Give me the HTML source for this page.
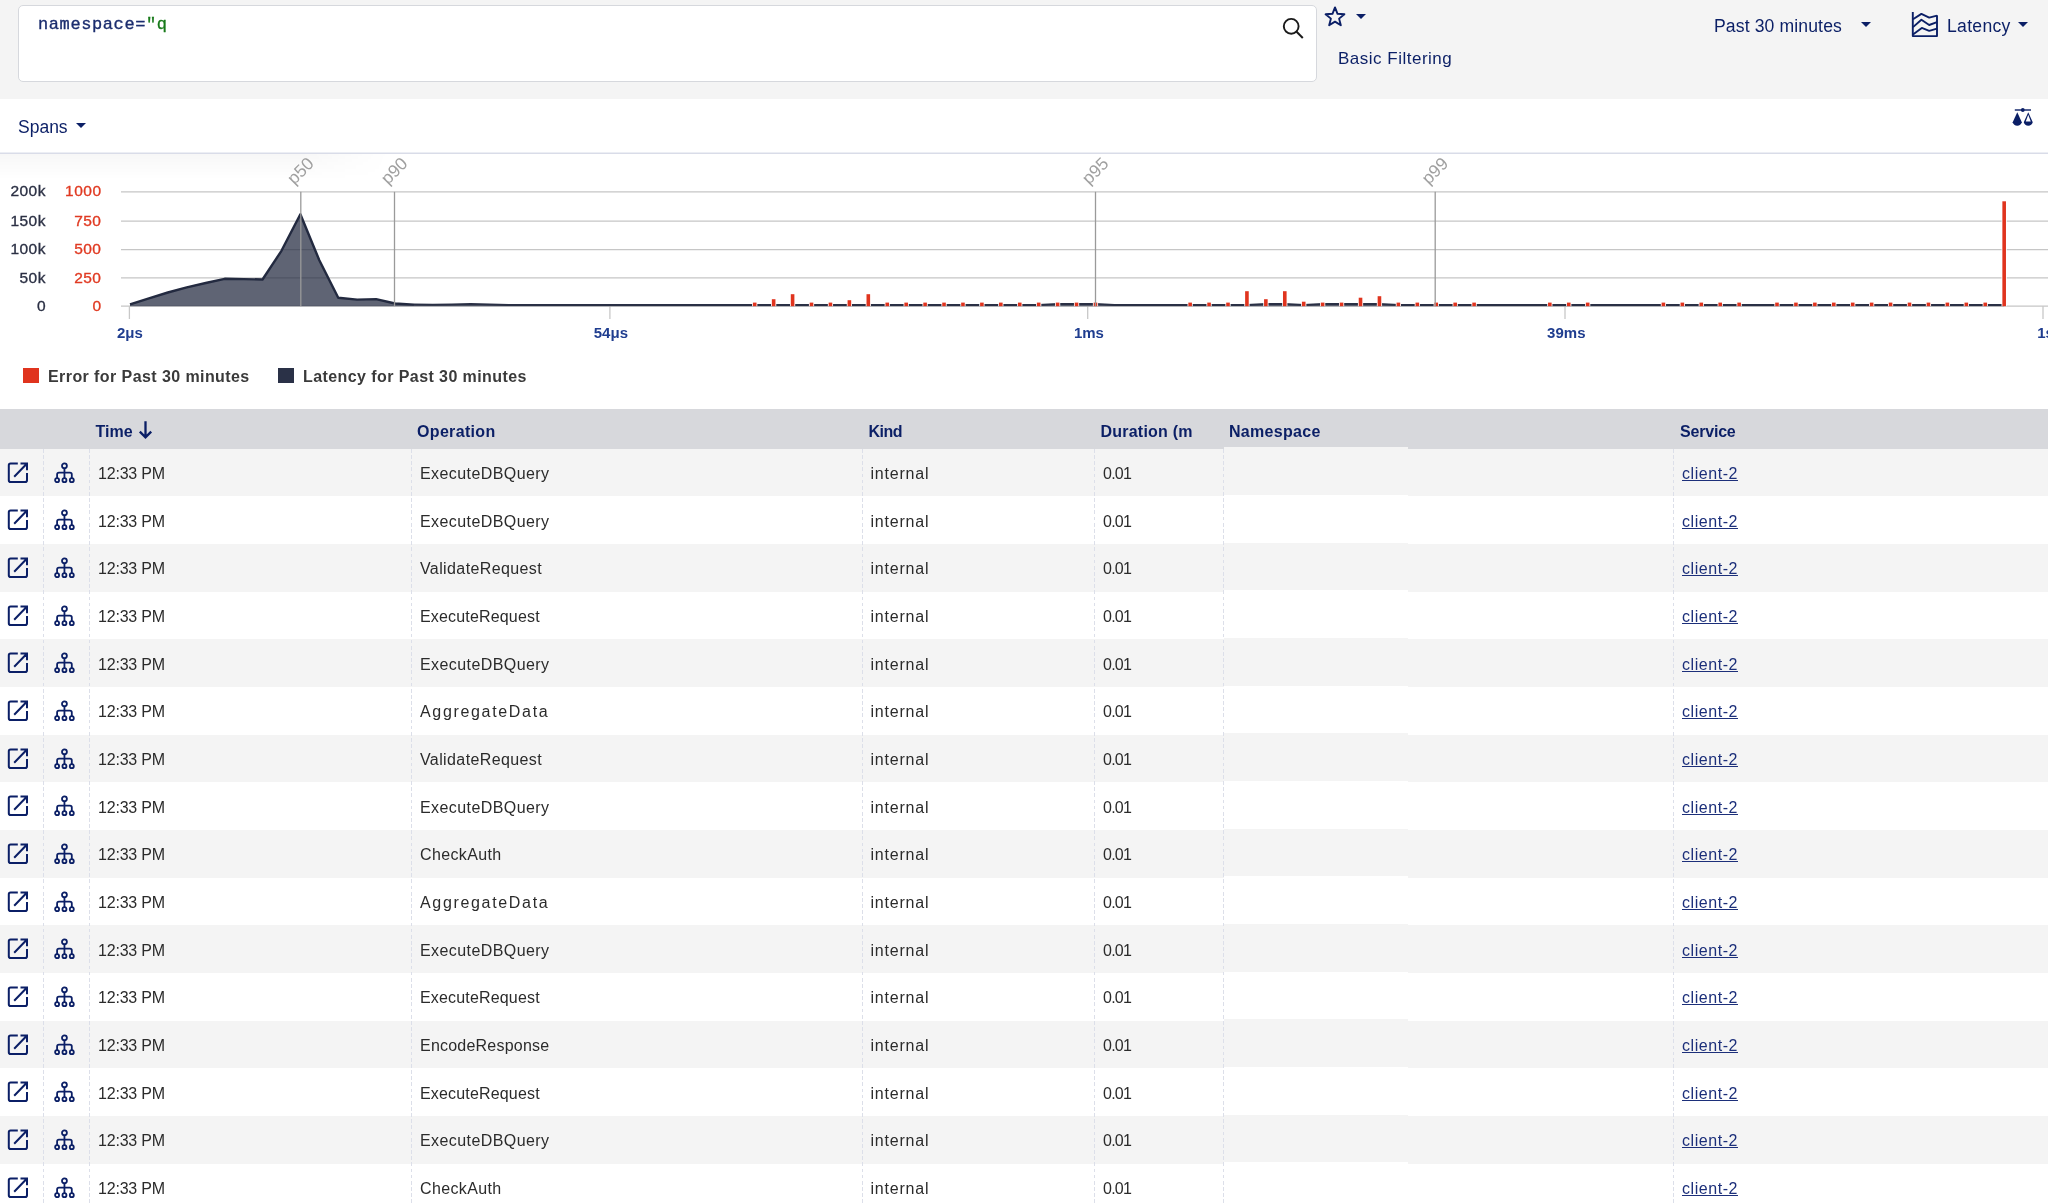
<!DOCTYPE html>
<html><head><meta charset="utf-8"><title>Spans</title>
<style>
html,body{margin:0;padding:0;}
body{width:2048px;height:1203px;overflow:hidden;position:relative;background:#fff;font-family:"Liberation Sans",sans-serif;color:#0b1f66;}
.abs{position:absolute;}
.topbar{position:absolute;left:0;top:0;width:2048px;height:99px;background:#f4f4f4;}
.search{position:absolute;left:18px;top:5px;width:1297px;height:75px;background:#fff;border:1px solid #d6d8dd;border-radius:5px;}
.q{position:absolute;left:38px;top:13.5px;font-family:"Liberation Mono",monospace;font-size:17px;letter-spacing:0.6px;line-height:22px;color:#1b2d6e;-webkit-text-stroke:0.35px currentColor;white-space:pre;}
.q .g{color:#187a1a;}
.t{position:absolute;white-space:nowrap;line-height:1;}
.tabline{position:absolute;left:0;top:152px;width:2048px;height:2px;background:linear-gradient(#eceef4 50%,#d9dce8 50%);}
.shadow{position:absolute;left:0;top:154px;width:400px;height:26px;background:linear-gradient(to bottom,rgba(0,0,0,0.03),rgba(0,0,0,0));-webkit-mask-image:linear-gradient(to right,#000 0,#000 300px,transparent 390px);mask-image:linear-gradient(to right,#000 0,#000 300px,transparent 390px);}
.chart{position:absolute;left:0;top:150px;}
.legend{position:absolute;top:368.8px;font-weight:bold;font-size:16px;line-height:1;letter-spacing:0.42px;color:#3a3a3a;white-space:nowrap;}
.sw{position:absolute;width:16px;height:15px;}
.thead{position:absolute;left:0;top:408.7px;width:2048px;height:40px;background:#d7d8dc;}
.th{position:absolute;top:15px;font-weight:bold;font-size:16px;color:#0b1f66;white-space:nowrap;line-height:1;}
.row{position:absolute;left:0;width:2048px;height:47.67px;}
.ic{position:absolute;top:13px;width:24px;height:24px;}
.ic svg{display:block;}
.c{position:absolute;top:17.2px;font-size:16px;line-height:1;color:#2b2b2b;white-space:nowrap;}
.lnk{color:#1c2f7a;text-decoration:underline;}
.sep{position:absolute;top:448.67px;height:760px;width:1px;background:repeating-linear-gradient(to bottom,#dcdfe9 0,#dcdfe9 3.7px,transparent 3.7px,transparent 6.15px);}
</style></head><body><div style="position:absolute;left:0;top:0;width:2048px;height:1203px;overflow:hidden;will-change:transform">
<div class="topbar"></div>
<div class="search"></div>
<div class="q">namespace=<span class="g">"q</span></div>
<svg class="abs" style="left:1280px;top:15px" width="26" height="26" viewBox="0 0 26 26"><circle cx="11.2" cy="11.3" r="7.4" fill="none" stroke="#1a1a1a" stroke-width="1.9"/><path d="M16.6 16.8L22.8 23" stroke="#1a1a1a" stroke-width="2" fill="none"/></svg>
<svg class="abs" style="left:1320px;top:2px" width="30" height="30" viewBox="0 0 30 30"><path d="M15.00 5.40L17.53 11.82L24.42 12.24L19.09 16.63L20.82 23.31L15.00 19.60L9.18 23.31L10.91 16.63L5.58 12.24L12.47 11.82Z" fill="none" stroke="#0b1f66" stroke-width="1.9" stroke-linejoin="round"/></svg>
<svg class="abs" style="left:1355px;top:13px" width="12" height="7" viewBox="0 0 12 7"><path d="M1 1H11L6 6Z" fill="#0b1f66"/></svg>
<div class="t" style="left:1338px;top:50px;font-size:17px;letter-spacing:0.5px">Basic Filtering</div>
<div class="t" style="left:1714px;top:18px;font-size:17.6px;letter-spacing:0.12px">Past 30 minutes</div>
<svg class="abs" style="left:1860px;top:21px" width="12" height="7" viewBox="0 0 12 7"><path d="M1 1H11L6 6Z" fill="#0b1f66"/></svg>
<svg class="abs" style="left:1905px;top:5px" width="40" height="40" viewBox="0 0 40 40"><g fill="none" stroke="#0b1f66" stroke-width="1.9" stroke-linejoin="round"><path d="M7.8 6.9V31.1H32V10.2"/><path d="M8 14.3L16.4 8.9L24.2 12.6L32 10.6"/><path d="M8 22.1L16.4 14.7L24.2 20L32 17.1"/><path d="M8 29.5L16.8 22.9L24.2 25.8L32 23.7"/></g></svg>
<div class="t" style="left:1947px;top:18px;font-size:17.6px;letter-spacing:0.3px">Latency</div>
<svg class="abs" style="left:2017px;top:21px" width="12" height="7" viewBox="0 0 12 7"><path d="M1 1H11L6 6Z" fill="#0b1f66"/></svg>
<div class="t" style="left:18px;top:119px;font-size:17.5px;">Spans</div>
<svg class="abs" style="left:75px;top:122px" width="12" height="7" viewBox="0 0 12 7"><path d="M1 1H11L6 6Z" fill="#0b1f66"/></svg>
<svg class="abs" style="left:2010px;top:106px" width="26" height="22" viewBox="0 0 26 22"><g fill="#0b1f66"><rect x="4.8" y="3.3" width="16.2" height="1.4"/><circle cx="12.8" cy="4" r="1.9"/><path d="M7.3 6.2L11.8 16.3A4.74 4.74 0 0 1 2.7 16.3Z"/><path d="M18.25 6.2L22.75 16.3A4.7 4.7 0 0 1 13.75 16.3ZM18.25 8.7L15.75 15.6H20.75Z" fill-rule="evenodd"/></g></svg>
<div class="tabline"></div>
<div class="shadow"></div>
<svg class="chart" width="2048" height="260" viewBox="0 150 2048 260">
<g stroke="#c6c6c6" stroke-width="1.3"><line x1="121" y1="191.8" x2="2048" y2="191.8"/><line x1="121" y1="221.2" x2="2048" y2="221.2"/><line x1="121" y1="249.6" x2="2048" y2="249.6"/><line x1="121" y1="277.9" x2="2048" y2="277.9"/><line x1="121" y1="306.2" x2="2048" y2="306.2"/></g>
<g stroke="#c8c8c8" stroke-width="1.3"><line x1="129.4" y1="306" x2="129.4" y2="319"/><line x1="609.9" y1="306" x2="609.9" y2="319"/><line x1="1087.7" y1="306" x2="1087.7" y2="319"/><line x1="1565" y1="306" x2="1565" y2="319"/><line x1="2043" y1="306" x2="2043" y2="319"/></g>
<path d="M130.00,306.2 L130.00,304.40 148.93,298.40 167.86,292.50 186.79,287.30 205.72,283.00 224.66,278.80 243.59,279.10 262.52,279.50 281.45,250.80 300.38,214.20 319.31,260.30 338.24,297.70 357.17,299.60 376.10,299.10 395.03,303.50 413.97,304.60 432.90,304.80 451.83,304.50 470.76,304.00 489.69,304.60 508.62,305.00 527.55,305.00 546.48,305.00 565.41,305.00 584.34,305.00 603.28,305.00 622.21,305.00 641.14,305.00 660.07,305.00 679.00,305.00 697.93,305.00 716.86,305.00 735.79,305.00 754.72,305.00 773.65,305.00 792.59,305.00 811.52,305.00 830.45,305.00 849.38,305.00 868.31,305.00 887.24,305.00 906.17,305.00 925.10,305.00 944.03,305.00 962.96,305.00 981.90,305.00 1000.83,305.00 1019.76,305.00 1038.69,305.00 1057.62,304.10 1076.55,304.10 1095.48,304.10 1114.41,305.00 1133.34,305.00 1152.27,305.00 1171.21,305.00 1190.14,305.00 1209.07,305.00 1228.00,305.00 1246.93,305.00 1265.86,304.10 1284.79,304.10 1303.72,305.00 1322.65,304.10 1341.58,304.10 1360.52,304.10 1379.45,304.10 1398.38,305.00 1417.31,305.00 1436.24,305.00 1455.17,305.00 1474.10,305.00 1493.03,305.00 1511.96,305.00 1530.89,305.00 1549.83,305.00 1568.76,305.00 1587.69,305.00 1606.62,305.00 1625.55,305.00 1644.48,305.00 1663.41,305.00 1682.34,305.00 1701.27,305.00 1720.20,305.00 1739.13,305.00 1758.07,305.00 1777.00,305.00 1795.93,305.00 1814.86,305.00 1833.79,305.00 1852.72,305.00 1871.65,305.00 1890.58,305.00 1909.51,305.00 1928.45,305.00 1947.38,305.00 1966.31,305.00 1985.24,305.00 2004.17,305.00 L2004.17,306.2 Z" fill="rgba(35,42,64,0.73)"/>
<path d="M130.00,304.40 148.93,298.40 167.86,292.50 186.79,287.30 205.72,283.00 224.66,278.80 243.59,279.10 262.52,279.50 281.45,250.80 300.38,214.20 319.31,260.30 338.24,297.70 357.17,299.60 376.10,299.10 395.03,303.50 413.97,304.60" fill="none" stroke="#232a40" stroke-width="2.4" stroke-linejoin="round"/><path d="M413.97,304.60 432.90,304.80 451.83,304.50 470.76,304.00 489.69,304.60 508.62,305.00 527.55,305.00 546.48,305.00 565.41,305.00 584.34,305.00 603.28,305.00 622.21,305.00 641.14,305.00 660.07,305.00 679.00,305.00 697.93,305.00 716.86,305.00 735.79,305.00 754.72,305.00 773.65,305.00 792.59,305.00 811.52,305.00 830.45,305.00 849.38,305.00 868.31,305.00 887.24,305.00 906.17,305.00 925.10,305.00 944.03,305.00 962.96,305.00 981.90,305.00 1000.83,305.00 1019.76,305.00 1038.69,305.00 1057.62,304.10 1076.55,304.10 1095.48,304.10 1114.41,305.00 1133.34,305.00 1152.27,305.00 1171.21,305.00 1190.14,305.00 1209.07,305.00 1228.00,305.00 1246.93,305.00 1265.86,304.10 1284.79,304.10 1303.72,305.00 1322.65,304.10 1341.58,304.10 1360.52,304.10 1379.45,304.10 1398.38,305.00 1417.31,305.00 1436.24,305.00 1455.17,305.00 1474.10,305.00 1493.03,305.00 1511.96,305.00 1530.89,305.00 1549.83,305.00 1568.76,305.00 1587.69,305.00 1606.62,305.00 1625.55,305.00 1644.48,305.00 1663.41,305.00 1682.34,305.00 1701.27,305.00 1720.20,305.00 1739.13,305.00 1758.07,305.00 1777.00,305.00 1795.93,305.00 1814.86,305.00 1833.79,305.00 1852.72,305.00 1871.65,305.00 1890.58,305.00 1909.51,305.00 1928.45,305.00 1947.38,305.00 1966.31,305.00 1985.24,305.00 2004.17,305.00" fill="none" stroke="#2a3045" stroke-width="2.0" stroke-linejoin="round"/>
<g fill="#e0341e"><rect x="752.12" y="302.60" width="5.2" height="3.60" fill="#fff"/><rect x="752.92" y="302.60" width="3.6" height="3.60"/><rect x="771.05" y="299.20" width="5.2" height="7.00" fill="#fff"/><rect x="771.85" y="299.20" width="3.6" height="7.00"/><rect x="789.99" y="294.20" width="5.2" height="12.00" fill="#fff"/><rect x="790.79" y="294.20" width="3.6" height="12.00"/><rect x="808.92" y="302.60" width="5.2" height="3.60" fill="#fff"/><rect x="809.72" y="302.60" width="3.6" height="3.60"/><rect x="827.85" y="302.60" width="5.2" height="3.60" fill="#fff"/><rect x="828.65" y="302.60" width="3.6" height="3.60"/><rect x="846.78" y="300.20" width="5.2" height="6.00" fill="#fff"/><rect x="847.58" y="300.20" width="3.6" height="6.00"/><rect x="865.71" y="294.20" width="5.2" height="12.00" fill="#fff"/><rect x="866.51" y="294.20" width="3.6" height="12.00"/><rect x="884.64" y="302.60" width="5.2" height="3.60" fill="#fff"/><rect x="885.44" y="302.60" width="3.6" height="3.60"/><rect x="903.57" y="302.60" width="5.2" height="3.60" fill="#fff"/><rect x="904.37" y="302.60" width="3.6" height="3.60"/><rect x="922.50" y="302.60" width="5.2" height="3.60" fill="#fff"/><rect x="923.30" y="302.60" width="3.6" height="3.60"/><rect x="941.43" y="302.60" width="5.2" height="3.60" fill="#fff"/><rect x="942.23" y="302.60" width="3.6" height="3.60"/><rect x="960.36" y="302.60" width="5.2" height="3.60" fill="#fff"/><rect x="961.16" y="302.60" width="3.6" height="3.60"/><rect x="979.30" y="302.60" width="5.2" height="3.60" fill="#fff"/><rect x="980.10" y="302.60" width="3.6" height="3.60"/><rect x="998.23" y="302.60" width="5.2" height="3.60" fill="#fff"/><rect x="999.03" y="302.60" width="3.6" height="3.60"/><rect x="1017.16" y="302.60" width="5.2" height="3.60" fill="#fff"/><rect x="1017.96" y="302.60" width="3.6" height="3.60"/><rect x="1036.09" y="302.60" width="5.2" height="3.60" fill="#fff"/><rect x="1036.89" y="302.60" width="3.6" height="3.60"/><rect x="1055.02" y="302.60" width="5.2" height="3.60" fill="#fff"/><rect x="1055.82" y="302.60" width="3.6" height="3.60"/><rect x="1073.95" y="302.60" width="5.2" height="3.60" fill="#fff"/><rect x="1074.75" y="302.60" width="3.6" height="3.60"/><rect x="1092.88" y="302.60" width="5.2" height="3.60" fill="#fff"/><rect x="1093.68" y="302.60" width="3.6" height="3.60"/><rect x="1187.54" y="302.60" width="5.2" height="3.60" fill="#fff"/><rect x="1188.34" y="302.60" width="3.6" height="3.60"/><rect x="1206.47" y="302.60" width="5.2" height="3.60" fill="#fff"/><rect x="1207.27" y="302.60" width="3.6" height="3.60"/><rect x="1225.40" y="302.60" width="5.2" height="3.60" fill="#fff"/><rect x="1226.20" y="302.60" width="3.6" height="3.60"/><rect x="1244.33" y="291.20" width="5.2" height="15.00" fill="#fff"/><rect x="1245.13" y="291.20" width="3.6" height="15.00"/><rect x="1263.26" y="299.20" width="5.2" height="7.00" fill="#fff"/><rect x="1264.06" y="299.20" width="3.6" height="7.00"/><rect x="1282.19" y="291.20" width="5.2" height="15.00" fill="#fff"/><rect x="1282.99" y="291.20" width="3.6" height="15.00"/><rect x="1301.12" y="301.70" width="5.2" height="4.50" fill="#fff"/><rect x="1301.92" y="301.70" width="3.6" height="4.50"/><rect x="1320.05" y="302.60" width="5.2" height="3.60" fill="#fff"/><rect x="1320.85" y="302.60" width="3.6" height="3.60"/><rect x="1338.98" y="302.60" width="5.2" height="3.60" fill="#fff"/><rect x="1339.78" y="302.60" width="3.6" height="3.60"/><rect x="1357.92" y="297.70" width="5.2" height="8.50" fill="#fff"/><rect x="1358.72" y="297.70" width="3.6" height="8.50"/><rect x="1376.85" y="296.20" width="5.2" height="10.00" fill="#fff"/><rect x="1377.65" y="296.20" width="3.6" height="10.00"/><rect x="1395.78" y="302.60" width="5.2" height="3.60" fill="#fff"/><rect x="1396.58" y="302.60" width="3.6" height="3.60"/><rect x="1414.71" y="302.60" width="5.2" height="3.60" fill="#fff"/><rect x="1415.51" y="302.60" width="3.6" height="3.60"/><rect x="1433.64" y="302.60" width="5.2" height="3.60" fill="#fff"/><rect x="1434.44" y="302.60" width="3.6" height="3.60"/><rect x="1452.57" y="302.60" width="5.2" height="3.60" fill="#fff"/><rect x="1453.37" y="302.60" width="3.6" height="3.60"/><rect x="1471.50" y="302.60" width="5.2" height="3.60" fill="#fff"/><rect x="1472.30" y="302.60" width="3.6" height="3.60"/><rect x="1547.23" y="302.60" width="5.2" height="3.60" fill="#fff"/><rect x="1548.03" y="302.60" width="3.6" height="3.60"/><rect x="1566.16" y="302.60" width="5.2" height="3.60" fill="#fff"/><rect x="1566.96" y="302.60" width="3.6" height="3.60"/><rect x="1585.09" y="302.60" width="5.2" height="3.60" fill="#fff"/><rect x="1585.89" y="302.60" width="3.6" height="3.60"/><rect x="1660.81" y="302.60" width="5.2" height="3.60" fill="#fff"/><rect x="1661.61" y="302.60" width="3.6" height="3.60"/><rect x="1679.74" y="302.60" width="5.2" height="3.60" fill="#fff"/><rect x="1680.54" y="302.60" width="3.6" height="3.60"/><rect x="1698.67" y="302.60" width="5.2" height="3.60" fill="#fff"/><rect x="1699.47" y="302.60" width="3.6" height="3.60"/><rect x="1717.60" y="302.60" width="5.2" height="3.60" fill="#fff"/><rect x="1718.40" y="302.60" width="3.6" height="3.60"/><rect x="1736.54" y="302.60" width="5.2" height="3.60" fill="#fff"/><rect x="1737.34" y="302.60" width="3.6" height="3.60"/><rect x="1774.40" y="302.60" width="5.2" height="3.60" fill="#fff"/><rect x="1775.20" y="302.60" width="3.6" height="3.60"/><rect x="1793.33" y="302.60" width="5.2" height="3.60" fill="#fff"/><rect x="1794.13" y="302.60" width="3.6" height="3.60"/><rect x="1812.26" y="302.60" width="5.2" height="3.60" fill="#fff"/><rect x="1813.06" y="302.60" width="3.6" height="3.60"/><rect x="1831.19" y="302.60" width="5.2" height="3.60" fill="#fff"/><rect x="1831.99" y="302.60" width="3.6" height="3.60"/><rect x="1850.12" y="302.60" width="5.2" height="3.60" fill="#fff"/><rect x="1850.92" y="302.60" width="3.6" height="3.60"/><rect x="1869.05" y="302.60" width="5.2" height="3.60" fill="#fff"/><rect x="1869.85" y="302.60" width="3.6" height="3.60"/><rect x="1887.98" y="302.60" width="5.2" height="3.60" fill="#fff"/><rect x="1888.78" y="302.60" width="3.6" height="3.60"/><rect x="1906.91" y="302.60" width="5.2" height="3.60" fill="#fff"/><rect x="1907.71" y="302.60" width="3.6" height="3.60"/><rect x="1925.85" y="302.60" width="5.2" height="3.60" fill="#fff"/><rect x="1926.65" y="302.60" width="3.6" height="3.60"/><rect x="1944.78" y="302.60" width="5.2" height="3.60" fill="#fff"/><rect x="1945.58" y="302.60" width="3.6" height="3.60"/><rect x="1963.71" y="302.60" width="5.2" height="3.60" fill="#fff"/><rect x="1964.51" y="302.60" width="3.6" height="3.60"/><rect x="1982.64" y="302.60" width="5.2" height="3.60" fill="#fff"/><rect x="1983.44" y="302.60" width="3.6" height="3.60"/><rect x="2001.57" y="201.30" width="5.2" height="104.90" fill="#fff"/><rect x="2002.37" y="201.30" width="3.6" height="104.90"/></g>
<g stroke="#9a9a9a" stroke-width="1.3"><line x1="300.80" y1="191.8" x2="300.80" y2="306"/><line x1="394.50" y1="191.8" x2="394.50" y2="306"/><line x1="1095.50" y1="191.8" x2="1095.50" y2="306"/><line x1="1435.20" y1="191.8" x2="1435.20" y2="306"/></g>
<g fill="#a0a0a0" font-size="17.5" font-family="Liberation Sans, sans-serif"><text transform="translate(294.30,185.3) rotate(-45)" >p50</text><text transform="translate(388.00,185.3) rotate(-45)" >p90</text><text transform="translate(1089.00,185.3) rotate(-45)" >p95</text><text transform="translate(1428.70,185.3) rotate(-45)" >p99</text></g>
<g font-size="15.5" letter-spacing="0.5" stroke-width="0.35" font-family="Liberation Sans, sans-serif"><text x="46" y="196.4" text-anchor="end" fill="#2b3044" stroke="#2b3044">200k</text><text x="46" y="225.8" text-anchor="end" fill="#2b3044" stroke="#2b3044">150k</text><text x="46" y="254.2" text-anchor="end" fill="#2b3044" stroke="#2b3044">100k</text><text x="46" y="282.5" text-anchor="end" fill="#2b3044" stroke="#2b3044">50k</text><text x="46" y="310.8" text-anchor="end" fill="#2b3044" stroke="#2b3044">0</text><text x="101.5" y="196.4" text-anchor="end" fill="#e03a22" stroke="#e03a22">1000</text><text x="101.5" y="225.8" text-anchor="end" fill="#e03a22" stroke="#e03a22">750</text><text x="101.5" y="254.2" text-anchor="end" fill="#e03a22" stroke="#e03a22">500</text><text x="101.5" y="282.5" text-anchor="end" fill="#e03a22" stroke="#e03a22">250</text><text x="101.5" y="310.8" text-anchor="end" fill="#e03a22" stroke="#e03a22">0</text></g>
<g fill="#1f3d8f" font-size="15" font-weight="bold" font-family="Liberation Sans, sans-serif"><text x="129.9" y="338" text-anchor="middle">2μs</text><text x="610.9" y="338" text-anchor="middle">54μs</text><text x="1088.9" y="338" text-anchor="middle">1ms</text><text x="1566.3" y="338" text-anchor="middle">39ms</text><text x="2045.5" y="338" text-anchor="middle">1s</text></g>
</svg>
<div class="sw" style="left:23px;top:368px;background:#e0341e"></div>
<div class="legend" style="left:48px">Error for Past 30 minutes</div>
<div class="sw" style="left:278px;top:368px;background:#2a3147"></div>
<div class="legend" style="left:303px">Latency for Past 30 minutes</div>
<div class="thead">
<div class="th" style="left:95.5px">Time</div><svg class="abs" style="left:137px;top:11px" width="18" height="20" viewBox="0 0 18 20"><path d="M8.5 1.2V17.5M2.8 11.6L8.5 17.4L14.2 11.6" fill="none" stroke="#0b1f66" stroke-width="2.3"/></svg>
<div class="th" style="left:417px;letter-spacing:0.33px">Operation</div>
<div class="th" style="left:868.5px;letter-spacing:-0.5px">Kind</div>
<div class="th" style="left:1100.5px;letter-spacing:0.22px">Duration (m</div>
<div class="th" style="left:1229px;letter-spacing:0.3px">Namespace</div>
<div class="th" style="left:1680px;letter-spacing:-0.2px">Service</div>
</div>
<div class="row" style="top:448.67px;background:#f4f4f4"><div class="ic" style="left:7px"><svg width="24" height="24" viewBox="0 0 24 24"><path d="M10.8 1.55H3.6Q1.8 1.55 1.8 3.35V18.2Q1.8 20 3.6 20H18.2Q20 20 20 18.2V11M13.5 1.55H20V8.3M20 1.55L7.2 14.7" fill="none" stroke="#0b1f66" stroke-width="2"/></svg></div><div class="ic" style="left:53px"><svg width="24" height="24" viewBox="0 0 24 24"><g fill="none" stroke="#0b1f66" stroke-width="1.8"><circle cx="11.45" cy="3.8" r="2.45"/><circle cx="4.1" cy="18.15" r="2"/><circle cx="11.45" cy="18.15" r="2"/><circle cx="18.8" cy="18.15" r="2"/><path d="M11.45 6.25V16.15M4.1 16.15V12.45Q4.1 10.6 5.95 10.6H16.95Q18.8 10.6 18.8 12.45V16.15"/></g></svg></div><span class="c" style="left:98px;letter-spacing:-0.2px">12:33 PM</span><span class="c" style="left:420px;letter-spacing:0.42px">ExecuteDBQuery</span><span class="c" style="left:870.5px;letter-spacing:0.8px">internal</span><span class="c" style="left:1103px;letter-spacing:-0.75px">0.01</span><span class="c lnk" style="left:1682px;letter-spacing:0.55px">client-2</span></div>
<div class="row" style="top:496.34px;background:#ffffff"><div class="ic" style="left:7px"><svg width="24" height="24" viewBox="0 0 24 24"><path d="M10.8 1.55H3.6Q1.8 1.55 1.8 3.35V18.2Q1.8 20 3.6 20H18.2Q20 20 20 18.2V11M13.5 1.55H20V8.3M20 1.55L7.2 14.7" fill="none" stroke="#0b1f66" stroke-width="2"/></svg></div><div class="ic" style="left:53px"><svg width="24" height="24" viewBox="0 0 24 24"><g fill="none" stroke="#0b1f66" stroke-width="1.8"><circle cx="11.45" cy="3.8" r="2.45"/><circle cx="4.1" cy="18.15" r="2"/><circle cx="11.45" cy="18.15" r="2"/><circle cx="18.8" cy="18.15" r="2"/><path d="M11.45 6.25V16.15M4.1 16.15V12.45Q4.1 10.6 5.95 10.6H16.95Q18.8 10.6 18.8 12.45V16.15"/></g></svg></div><span class="c" style="left:98px;letter-spacing:-0.2px">12:33 PM</span><span class="c" style="left:420px;letter-spacing:0.42px">ExecuteDBQuery</span><span class="c" style="left:870.5px;letter-spacing:0.8px">internal</span><span class="c" style="left:1103px;letter-spacing:-0.75px">0.01</span><span class="c lnk" style="left:1682px;letter-spacing:0.55px">client-2</span></div>
<div class="row" style="top:544.01px;background:#f4f4f4"><div class="ic" style="left:7px"><svg width="24" height="24" viewBox="0 0 24 24"><path d="M10.8 1.55H3.6Q1.8 1.55 1.8 3.35V18.2Q1.8 20 3.6 20H18.2Q20 20 20 18.2V11M13.5 1.55H20V8.3M20 1.55L7.2 14.7" fill="none" stroke="#0b1f66" stroke-width="2"/></svg></div><div class="ic" style="left:53px"><svg width="24" height="24" viewBox="0 0 24 24"><g fill="none" stroke="#0b1f66" stroke-width="1.8"><circle cx="11.45" cy="3.8" r="2.45"/><circle cx="4.1" cy="18.15" r="2"/><circle cx="11.45" cy="18.15" r="2"/><circle cx="18.8" cy="18.15" r="2"/><path d="M11.45 6.25V16.15M4.1 16.15V12.45Q4.1 10.6 5.95 10.6H16.95Q18.8 10.6 18.8 12.45V16.15"/></g></svg></div><span class="c" style="left:98px;letter-spacing:-0.2px">12:33 PM</span><span class="c" style="left:420px;letter-spacing:0.39px">ValidateRequest</span><span class="c" style="left:870.5px;letter-spacing:0.8px">internal</span><span class="c" style="left:1103px;letter-spacing:-0.75px">0.01</span><span class="c lnk" style="left:1682px;letter-spacing:0.55px">client-2</span></div>
<div class="row" style="top:591.68px;background:#ffffff"><div class="ic" style="left:7px"><svg width="24" height="24" viewBox="0 0 24 24"><path d="M10.8 1.55H3.6Q1.8 1.55 1.8 3.35V18.2Q1.8 20 3.6 20H18.2Q20 20 20 18.2V11M13.5 1.55H20V8.3M20 1.55L7.2 14.7" fill="none" stroke="#0b1f66" stroke-width="2"/></svg></div><div class="ic" style="left:53px"><svg width="24" height="24" viewBox="0 0 24 24"><g fill="none" stroke="#0b1f66" stroke-width="1.8"><circle cx="11.45" cy="3.8" r="2.45"/><circle cx="4.1" cy="18.15" r="2"/><circle cx="11.45" cy="18.15" r="2"/><circle cx="18.8" cy="18.15" r="2"/><path d="M11.45 6.25V16.15M4.1 16.15V12.45Q4.1 10.6 5.95 10.6H16.95Q18.8 10.6 18.8 12.45V16.15"/></g></svg></div><span class="c" style="left:98px;letter-spacing:-0.2px">12:33 PM</span><span class="c" style="left:420px;letter-spacing:0.17px">ExecuteRequest</span><span class="c" style="left:870.5px;letter-spacing:0.8px">internal</span><span class="c" style="left:1103px;letter-spacing:-0.75px">0.01</span><span class="c lnk" style="left:1682px;letter-spacing:0.55px">client-2</span></div>
<div class="row" style="top:639.35px;background:#f4f4f4"><div class="ic" style="left:7px"><svg width="24" height="24" viewBox="0 0 24 24"><path d="M10.8 1.55H3.6Q1.8 1.55 1.8 3.35V18.2Q1.8 20 3.6 20H18.2Q20 20 20 18.2V11M13.5 1.55H20V8.3M20 1.55L7.2 14.7" fill="none" stroke="#0b1f66" stroke-width="2"/></svg></div><div class="ic" style="left:53px"><svg width="24" height="24" viewBox="0 0 24 24"><g fill="none" stroke="#0b1f66" stroke-width="1.8"><circle cx="11.45" cy="3.8" r="2.45"/><circle cx="4.1" cy="18.15" r="2"/><circle cx="11.45" cy="18.15" r="2"/><circle cx="18.8" cy="18.15" r="2"/><path d="M11.45 6.25V16.15M4.1 16.15V12.45Q4.1 10.6 5.95 10.6H16.95Q18.8 10.6 18.8 12.45V16.15"/></g></svg></div><span class="c" style="left:98px;letter-spacing:-0.2px">12:33 PM</span><span class="c" style="left:420px;letter-spacing:0.42px">ExecuteDBQuery</span><span class="c" style="left:870.5px;letter-spacing:0.8px">internal</span><span class="c" style="left:1103px;letter-spacing:-0.75px">0.01</span><span class="c lnk" style="left:1682px;letter-spacing:0.55px">client-2</span></div>
<div class="row" style="top:687.02px;background:#ffffff"><div class="ic" style="left:7px"><svg width="24" height="24" viewBox="0 0 24 24"><path d="M10.8 1.55H3.6Q1.8 1.55 1.8 3.35V18.2Q1.8 20 3.6 20H18.2Q20 20 20 18.2V11M13.5 1.55H20V8.3M20 1.55L7.2 14.7" fill="none" stroke="#0b1f66" stroke-width="2"/></svg></div><div class="ic" style="left:53px"><svg width="24" height="24" viewBox="0 0 24 24"><g fill="none" stroke="#0b1f66" stroke-width="1.8"><circle cx="11.45" cy="3.8" r="2.45"/><circle cx="4.1" cy="18.15" r="2"/><circle cx="11.45" cy="18.15" r="2"/><circle cx="18.8" cy="18.15" r="2"/><path d="M11.45 6.25V16.15M4.1 16.15V12.45Q4.1 10.6 5.95 10.6H16.95Q18.8 10.6 18.8 12.45V16.15"/></g></svg></div><span class="c" style="left:98px;letter-spacing:-0.2px">12:33 PM</span><span class="c" style="left:420px;letter-spacing:1.67px">AggregateData</span><span class="c" style="left:870.5px;letter-spacing:0.8px">internal</span><span class="c" style="left:1103px;letter-spacing:-0.75px">0.01</span><span class="c lnk" style="left:1682px;letter-spacing:0.55px">client-2</span></div>
<div class="row" style="top:734.69px;background:#f4f4f4"><div class="ic" style="left:7px"><svg width="24" height="24" viewBox="0 0 24 24"><path d="M10.8 1.55H3.6Q1.8 1.55 1.8 3.35V18.2Q1.8 20 3.6 20H18.2Q20 20 20 18.2V11M13.5 1.55H20V8.3M20 1.55L7.2 14.7" fill="none" stroke="#0b1f66" stroke-width="2"/></svg></div><div class="ic" style="left:53px"><svg width="24" height="24" viewBox="0 0 24 24"><g fill="none" stroke="#0b1f66" stroke-width="1.8"><circle cx="11.45" cy="3.8" r="2.45"/><circle cx="4.1" cy="18.15" r="2"/><circle cx="11.45" cy="18.15" r="2"/><circle cx="18.8" cy="18.15" r="2"/><path d="M11.45 6.25V16.15M4.1 16.15V12.45Q4.1 10.6 5.95 10.6H16.95Q18.8 10.6 18.8 12.45V16.15"/></g></svg></div><span class="c" style="left:98px;letter-spacing:-0.2px">12:33 PM</span><span class="c" style="left:420px;letter-spacing:0.39px">ValidateRequest</span><span class="c" style="left:870.5px;letter-spacing:0.8px">internal</span><span class="c" style="left:1103px;letter-spacing:-0.75px">0.01</span><span class="c lnk" style="left:1682px;letter-spacing:0.55px">client-2</span></div>
<div class="row" style="top:782.36px;background:#ffffff"><div class="ic" style="left:7px"><svg width="24" height="24" viewBox="0 0 24 24"><path d="M10.8 1.55H3.6Q1.8 1.55 1.8 3.35V18.2Q1.8 20 3.6 20H18.2Q20 20 20 18.2V11M13.5 1.55H20V8.3M20 1.55L7.2 14.7" fill="none" stroke="#0b1f66" stroke-width="2"/></svg></div><div class="ic" style="left:53px"><svg width="24" height="24" viewBox="0 0 24 24"><g fill="none" stroke="#0b1f66" stroke-width="1.8"><circle cx="11.45" cy="3.8" r="2.45"/><circle cx="4.1" cy="18.15" r="2"/><circle cx="11.45" cy="18.15" r="2"/><circle cx="18.8" cy="18.15" r="2"/><path d="M11.45 6.25V16.15M4.1 16.15V12.45Q4.1 10.6 5.95 10.6H16.95Q18.8 10.6 18.8 12.45V16.15"/></g></svg></div><span class="c" style="left:98px;letter-spacing:-0.2px">12:33 PM</span><span class="c" style="left:420px;letter-spacing:0.42px">ExecuteDBQuery</span><span class="c" style="left:870.5px;letter-spacing:0.8px">internal</span><span class="c" style="left:1103px;letter-spacing:-0.75px">0.01</span><span class="c lnk" style="left:1682px;letter-spacing:0.55px">client-2</span></div>
<div class="row" style="top:830.03px;background:#f4f4f4"><div class="ic" style="left:7px"><svg width="24" height="24" viewBox="0 0 24 24"><path d="M10.8 1.55H3.6Q1.8 1.55 1.8 3.35V18.2Q1.8 20 3.6 20H18.2Q20 20 20 18.2V11M13.5 1.55H20V8.3M20 1.55L7.2 14.7" fill="none" stroke="#0b1f66" stroke-width="2"/></svg></div><div class="ic" style="left:53px"><svg width="24" height="24" viewBox="0 0 24 24"><g fill="none" stroke="#0b1f66" stroke-width="1.8"><circle cx="11.45" cy="3.8" r="2.45"/><circle cx="4.1" cy="18.15" r="2"/><circle cx="11.45" cy="18.15" r="2"/><circle cx="18.8" cy="18.15" r="2"/><path d="M11.45 6.25V16.15M4.1 16.15V12.45Q4.1 10.6 5.95 10.6H16.95Q18.8 10.6 18.8 12.45V16.15"/></g></svg></div><span class="c" style="left:98px;letter-spacing:-0.2px">12:33 PM</span><span class="c" style="left:420px;letter-spacing:0.375px">CheckAuth</span><span class="c" style="left:870.5px;letter-spacing:0.8px">internal</span><span class="c" style="left:1103px;letter-spacing:-0.75px">0.01</span><span class="c lnk" style="left:1682px;letter-spacing:0.55px">client-2</span></div>
<div class="row" style="top:877.70px;background:#ffffff"><div class="ic" style="left:7px"><svg width="24" height="24" viewBox="0 0 24 24"><path d="M10.8 1.55H3.6Q1.8 1.55 1.8 3.35V18.2Q1.8 20 3.6 20H18.2Q20 20 20 18.2V11M13.5 1.55H20V8.3M20 1.55L7.2 14.7" fill="none" stroke="#0b1f66" stroke-width="2"/></svg></div><div class="ic" style="left:53px"><svg width="24" height="24" viewBox="0 0 24 24"><g fill="none" stroke="#0b1f66" stroke-width="1.8"><circle cx="11.45" cy="3.8" r="2.45"/><circle cx="4.1" cy="18.15" r="2"/><circle cx="11.45" cy="18.15" r="2"/><circle cx="18.8" cy="18.15" r="2"/><path d="M11.45 6.25V16.15M4.1 16.15V12.45Q4.1 10.6 5.95 10.6H16.95Q18.8 10.6 18.8 12.45V16.15"/></g></svg></div><span class="c" style="left:98px;letter-spacing:-0.2px">12:33 PM</span><span class="c" style="left:420px;letter-spacing:1.67px">AggregateData</span><span class="c" style="left:870.5px;letter-spacing:0.8px">internal</span><span class="c" style="left:1103px;letter-spacing:-0.75px">0.01</span><span class="c lnk" style="left:1682px;letter-spacing:0.55px">client-2</span></div>
<div class="row" style="top:925.37px;background:#f4f4f4"><div class="ic" style="left:7px"><svg width="24" height="24" viewBox="0 0 24 24"><path d="M10.8 1.55H3.6Q1.8 1.55 1.8 3.35V18.2Q1.8 20 3.6 20H18.2Q20 20 20 18.2V11M13.5 1.55H20V8.3M20 1.55L7.2 14.7" fill="none" stroke="#0b1f66" stroke-width="2"/></svg></div><div class="ic" style="left:53px"><svg width="24" height="24" viewBox="0 0 24 24"><g fill="none" stroke="#0b1f66" stroke-width="1.8"><circle cx="11.45" cy="3.8" r="2.45"/><circle cx="4.1" cy="18.15" r="2"/><circle cx="11.45" cy="18.15" r="2"/><circle cx="18.8" cy="18.15" r="2"/><path d="M11.45 6.25V16.15M4.1 16.15V12.45Q4.1 10.6 5.95 10.6H16.95Q18.8 10.6 18.8 12.45V16.15"/></g></svg></div><span class="c" style="left:98px;letter-spacing:-0.2px">12:33 PM</span><span class="c" style="left:420px;letter-spacing:0.42px">ExecuteDBQuery</span><span class="c" style="left:870.5px;letter-spacing:0.8px">internal</span><span class="c" style="left:1103px;letter-spacing:-0.75px">0.01</span><span class="c lnk" style="left:1682px;letter-spacing:0.55px">client-2</span></div>
<div class="row" style="top:973.04px;background:#ffffff"><div class="ic" style="left:7px"><svg width="24" height="24" viewBox="0 0 24 24"><path d="M10.8 1.55H3.6Q1.8 1.55 1.8 3.35V18.2Q1.8 20 3.6 20H18.2Q20 20 20 18.2V11M13.5 1.55H20V8.3M20 1.55L7.2 14.7" fill="none" stroke="#0b1f66" stroke-width="2"/></svg></div><div class="ic" style="left:53px"><svg width="24" height="24" viewBox="0 0 24 24"><g fill="none" stroke="#0b1f66" stroke-width="1.8"><circle cx="11.45" cy="3.8" r="2.45"/><circle cx="4.1" cy="18.15" r="2"/><circle cx="11.45" cy="18.15" r="2"/><circle cx="18.8" cy="18.15" r="2"/><path d="M11.45 6.25V16.15M4.1 16.15V12.45Q4.1 10.6 5.95 10.6H16.95Q18.8 10.6 18.8 12.45V16.15"/></g></svg></div><span class="c" style="left:98px;letter-spacing:-0.2px">12:33 PM</span><span class="c" style="left:420px;letter-spacing:0.17px">ExecuteRequest</span><span class="c" style="left:870.5px;letter-spacing:0.8px">internal</span><span class="c" style="left:1103px;letter-spacing:-0.75px">0.01</span><span class="c lnk" style="left:1682px;letter-spacing:0.55px">client-2</span></div>
<div class="row" style="top:1020.71px;background:#f4f4f4"><div class="ic" style="left:7px"><svg width="24" height="24" viewBox="0 0 24 24"><path d="M10.8 1.55H3.6Q1.8 1.55 1.8 3.35V18.2Q1.8 20 3.6 20H18.2Q20 20 20 18.2V11M13.5 1.55H20V8.3M20 1.55L7.2 14.7" fill="none" stroke="#0b1f66" stroke-width="2"/></svg></div><div class="ic" style="left:53px"><svg width="24" height="24" viewBox="0 0 24 24"><g fill="none" stroke="#0b1f66" stroke-width="1.8"><circle cx="11.45" cy="3.8" r="2.45"/><circle cx="4.1" cy="18.15" r="2"/><circle cx="11.45" cy="18.15" r="2"/><circle cx="18.8" cy="18.15" r="2"/><path d="M11.45 6.25V16.15M4.1 16.15V12.45Q4.1 10.6 5.95 10.6H16.95Q18.8 10.6 18.8 12.45V16.15"/></g></svg></div><span class="c" style="left:98px;letter-spacing:-0.2px">12:33 PM</span><span class="c" style="left:420px;letter-spacing:0.215px">EncodeResponse</span><span class="c" style="left:870.5px;letter-spacing:0.8px">internal</span><span class="c" style="left:1103px;letter-spacing:-0.75px">0.01</span><span class="c lnk" style="left:1682px;letter-spacing:0.55px">client-2</span></div>
<div class="row" style="top:1068.38px;background:#ffffff"><div class="ic" style="left:7px"><svg width="24" height="24" viewBox="0 0 24 24"><path d="M10.8 1.55H3.6Q1.8 1.55 1.8 3.35V18.2Q1.8 20 3.6 20H18.2Q20 20 20 18.2V11M13.5 1.55H20V8.3M20 1.55L7.2 14.7" fill="none" stroke="#0b1f66" stroke-width="2"/></svg></div><div class="ic" style="left:53px"><svg width="24" height="24" viewBox="0 0 24 24"><g fill="none" stroke="#0b1f66" stroke-width="1.8"><circle cx="11.45" cy="3.8" r="2.45"/><circle cx="4.1" cy="18.15" r="2"/><circle cx="11.45" cy="18.15" r="2"/><circle cx="18.8" cy="18.15" r="2"/><path d="M11.45 6.25V16.15M4.1 16.15V12.45Q4.1 10.6 5.95 10.6H16.95Q18.8 10.6 18.8 12.45V16.15"/></g></svg></div><span class="c" style="left:98px;letter-spacing:-0.2px">12:33 PM</span><span class="c" style="left:420px;letter-spacing:0.17px">ExecuteRequest</span><span class="c" style="left:870.5px;letter-spacing:0.8px">internal</span><span class="c" style="left:1103px;letter-spacing:-0.75px">0.01</span><span class="c lnk" style="left:1682px;letter-spacing:0.55px">client-2</span></div>
<div class="row" style="top:1116.05px;background:#f4f4f4"><div class="ic" style="left:7px"><svg width="24" height="24" viewBox="0 0 24 24"><path d="M10.8 1.55H3.6Q1.8 1.55 1.8 3.35V18.2Q1.8 20 3.6 20H18.2Q20 20 20 18.2V11M13.5 1.55H20V8.3M20 1.55L7.2 14.7" fill="none" stroke="#0b1f66" stroke-width="2"/></svg></div><div class="ic" style="left:53px"><svg width="24" height="24" viewBox="0 0 24 24"><g fill="none" stroke="#0b1f66" stroke-width="1.8"><circle cx="11.45" cy="3.8" r="2.45"/><circle cx="4.1" cy="18.15" r="2"/><circle cx="11.45" cy="18.15" r="2"/><circle cx="18.8" cy="18.15" r="2"/><path d="M11.45 6.25V16.15M4.1 16.15V12.45Q4.1 10.6 5.95 10.6H16.95Q18.8 10.6 18.8 12.45V16.15"/></g></svg></div><span class="c" style="left:98px;letter-spacing:-0.2px">12:33 PM</span><span class="c" style="left:420px;letter-spacing:0.42px">ExecuteDBQuery</span><span class="c" style="left:870.5px;letter-spacing:0.8px">internal</span><span class="c" style="left:1103px;letter-spacing:-0.75px">0.01</span><span class="c lnk" style="left:1682px;letter-spacing:0.55px">client-2</span></div>
<div class="row" style="top:1163.72px;background:#ffffff"><div class="ic" style="left:7px"><svg width="24" height="24" viewBox="0 0 24 24"><path d="M10.8 1.55H3.6Q1.8 1.55 1.8 3.35V18.2Q1.8 20 3.6 20H18.2Q20 20 20 18.2V11M13.5 1.55H20V8.3M20 1.55L7.2 14.7" fill="none" stroke="#0b1f66" stroke-width="2"/></svg></div><div class="ic" style="left:53px"><svg width="24" height="24" viewBox="0 0 24 24"><g fill="none" stroke="#0b1f66" stroke-width="1.8"><circle cx="11.45" cy="3.8" r="2.45"/><circle cx="4.1" cy="18.15" r="2"/><circle cx="11.45" cy="18.15" r="2"/><circle cx="18.8" cy="18.15" r="2"/><path d="M11.45 6.25V16.15M4.1 16.15V12.45Q4.1 10.6 5.95 10.6H16.95Q18.8 10.6 18.8 12.45V16.15"/></g></svg></div><span class="c" style="left:98px;letter-spacing:-0.2px">12:33 PM</span><span class="c" style="left:420px;letter-spacing:0.375px">CheckAuth</span><span class="c" style="left:870.5px;letter-spacing:0.8px">internal</span><span class="c" style="left:1103px;letter-spacing:-0.75px">0.01</span><span class="c lnk" style="left:1682px;letter-spacing:0.55px">client-2</span></div>
<div class="row" style="top:447.17px;left:1223.5px;width:184.5px;background:#f4f4f4"></div>
<div class="row" style="top:494.84px;left:1223.5px;width:184.5px;background:#ffffff"></div>
<div class="row" style="top:542.51px;left:1223.5px;width:184.5px;background:#f4f4f4"></div>
<div class="row" style="top:590.18px;left:1223.5px;width:184.5px;background:#ffffff"></div>
<div class="row" style="top:637.85px;left:1223.5px;width:184.5px;background:#f4f4f4"></div>
<div class="row" style="top:685.52px;left:1223.5px;width:184.5px;background:#ffffff"></div>
<div class="row" style="top:733.19px;left:1223.5px;width:184.5px;background:#f4f4f4"></div>
<div class="row" style="top:780.86px;left:1223.5px;width:184.5px;background:#ffffff"></div>
<div class="row" style="top:828.53px;left:1223.5px;width:184.5px;background:#f4f4f4"></div>
<div class="row" style="top:876.20px;left:1223.5px;width:184.5px;background:#ffffff"></div>
<div class="row" style="top:923.87px;left:1223.5px;width:184.5px;background:#f4f4f4"></div>
<div class="row" style="top:971.54px;left:1223.5px;width:184.5px;background:#ffffff"></div>
<div class="row" style="top:1019.21px;left:1223.5px;width:184.5px;background:#f4f4f4"></div>
<div class="row" style="top:1066.88px;left:1223.5px;width:184.5px;background:#ffffff"></div>
<div class="row" style="top:1114.55px;left:1223.5px;width:184.5px;background:#f4f4f4"></div>
<div class="row" style="top:1162.22px;left:1223.5px;width:184.5px;background:#ffffff"></div>
<div class="sep" style="left:43px"></div><div class="sep" style="left:89px"></div><div class="sep" style="left:411px"></div><div class="sep" style="left:862px"></div><div class="sep" style="left:1094px"></div><div class="sep" style="left:1223px"></div><div class="sep" style="left:1673px"></div>
</div></body></html>
